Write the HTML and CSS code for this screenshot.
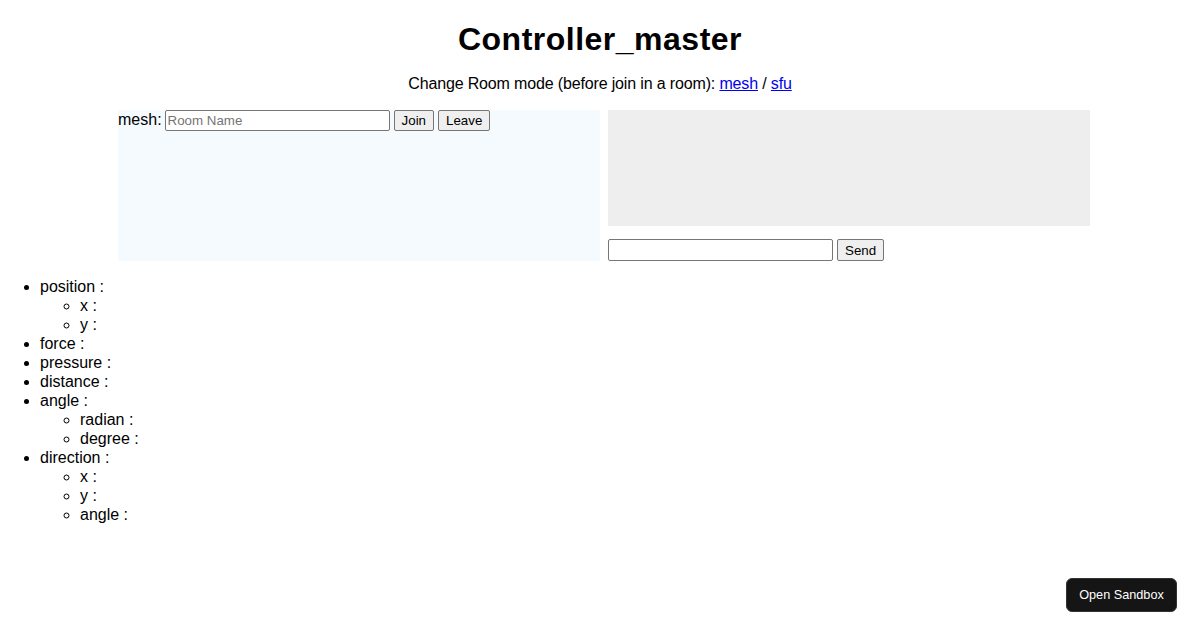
FILE: index.html
```html
<!DOCTYPE html>
<html>
<head>
<meta charset="utf-8">
<link rel="stylesheet" href="styles.css">
</head>
<body>
<h1 class="title">Controller_master</h1>
<p class="mode">Change Room mode (before join in a room): <a href="#">mesh</a> / <a href="#">sfu</a></p>
<div class="container">
  <div class="room">
    <span class="room-label">mesh:</span>
    <input class="field" type="text" placeholder="Room Name">
    <button class="btn">Join</button>
    <button class="btn">Leave</button>
  </div>
  <div class="chat">
    <div class="messages"></div>
    <div class="send-row">
      <input class="field" type="text">
      <button class="btn">Send</button>
    </div>
  </div>
</div>
<ul class="stats">
  <li>position :
    <ul class="sub"><li>x :</li><li>y :</li></ul>
  </li>
  <li>force :</li>
  <li>pressure :</li>
  <li>distance :</li>
  <li>angle :
    <ul class="sub"><li>radian :</li><li>degree :</li></ul>
  </li>
  <li>direction :
    <ul class="sub"><li>x :</li><li>y :</li><li>angle :</li></ul>
  </li>
</ul>
<button class="sandbox">Open Sandbox</button>
</body>
</html>
```
FILE: styles.css
```css
html, body {
  margin: 0;
  padding: 0;
  background: #fff;
}
body {
  font-family: "Liberation Sans", Arial, sans-serif;
  font-size: 16px;
  color: #000;
}
.title {
  font-size: 32px;
  font-weight: bold;
  text-align: center;
  margin: 21px 0 0;
  line-height: 37px;
  letter-spacing: 0.5px;
}
.mode {
  text-align: center;
  margin: 17px 0 0;
  line-height: 18px;
  letter-spacing: -0.15px;
}
.mode a {
  color: #0000ee;
}
.container {
  display: flex;
  gap: 8px;
  margin: 17px 0 0 118px;
}
.room {
  width: 482px;
  height: 151px;
  background: #f5faff;
  display: flex;
  align-items: flex-start;
  gap: 4px;
  line-height: 19px;
}
.room-label {
  margin-right: -1px;
}
.field {
  width: 225px;
  height: 21px;
  box-sizing: border-box;
  border: 1px solid #767676;
  border-radius: 2px;
  padding: 1px 2px;
  font-family: "Liberation Sans", Arial, sans-serif;
  font-size: 13.33px;
  margin: 0;
}
.field::placeholder {
  color: #757575;
}
.btn {
  height: 21px;
  box-sizing: border-box;
  border: 1px solid #767676;
  border-radius: 2px;
  background: #efefef;
  font-family: "Liberation Sans", Arial, sans-serif;
  font-size: 13.33px;
  padding: 1px 7px;
  margin: 0;
  color: #000;
}
.chat {
  width: 482px;
  display: flex;
  flex-direction: column;
  gap: 13px;
}
.messages {
  height: 116px;
  background: #eeeeee;
}
.send-row {
  display: flex;
  gap: 4px;
  align-items: center;
}
.send-row .field {
  height: 22px;
}
.send-row .btn {
  height: 22px;
}
.stats {
  margin: 16px 0 0;
  padding-left: 40px;
  line-height: 19px;
}
.sub {
  margin: 0;
  padding-left: 40px;
  list-style-type: circle;
}
.sandbox {
  position: fixed;
  right: 23px;
  bottom: 18px;
  width: 111px;
  height: 34px;
  background: #151515;
  color: #fff;
  border: 1px solid #333;
  border-radius: 6px;
  font-family: "Liberation Sans", Arial, sans-serif;
  font-size: 12.7px;
  padding: 0;
}
```
